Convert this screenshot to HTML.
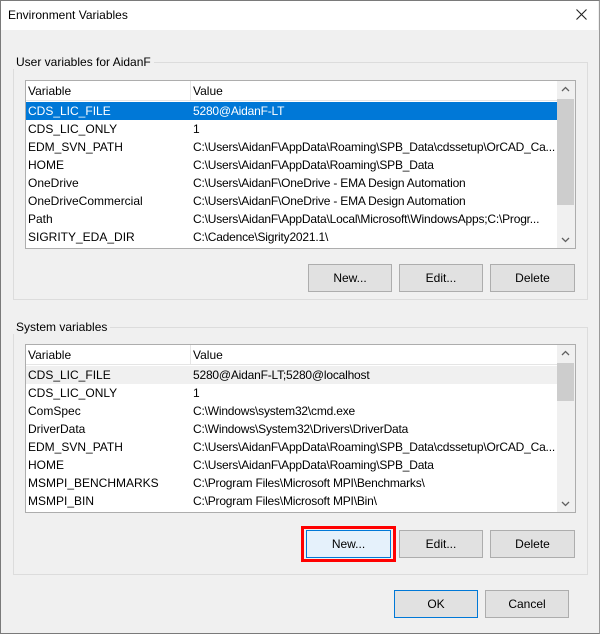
<!DOCTYPE html>
<html><head><style>
*{margin:0;padding:0;box-sizing:border-box}
body{width:600px;height:634px;background:#f0f0f0;font-family:"Liberation Sans",sans-serif;font-size:12px;color:#000;position:relative;overflow:hidden}
.a{position:absolute}
.win{left:0;top:0;width:600px;height:634px;border:1px solid #7a7a7a;border-right-color:#9a9a9a}
.title{left:1px;top:1px;width:597px;height:29px;background:#fff}
.grp{border:1px solid #dcdcdc}
.lbl{background:#f0f0f0;padding:0 3px}
.list{background:#fff;border:1px solid #adadad;overflow:hidden}
.row{position:absolute;left:0;height:18px;line-height:18px;width:531px;white-space:nowrap;overflow:hidden}
.row span{position:absolute}
.row .v{left:2px}.row .w{left:167px;letter-spacing:-0.2px}
.hdr{position:absolute;left:0;top:0;width:531px;height:20px;line-height:20px;border-bottom:1px solid #e5e5e5}
.hdr .d{position:absolute;left:164px;top:0;width:1px;height:20px;background:#e5e5e5}
.sb{position:absolute;right:0;top:0;width:18px;height:100%;background:#f0f0f0}
.th{position:absolute;left:0;width:17px;background:#cdcdcd}
.btn{position:absolute;background:#e1e1e1;border:1px solid #adadad;text-align:center;font-size:12px}
.arr{position:absolute;left:4px}
</style></head><body>
<div class="a win"></div>
<div class="a title"></div>
<div class="a" style="left:8px;top:8px;font-size:12px">Environment Variables</div>
<svg class="a" style="left:576px;top:9px" width="11" height="11"><path d="M0.5 0.5L10.5 10.5M10.5 0.5L0.5 10.5" stroke="#222" stroke-width="1.1"/></svg>

<div class="a grp" style="left:13px;top:62px;width:575px;height:238px"></div>
<div class="a lbl" style="left:13px;top:55px">User variables for AidanF</div>
<div class="a list" style="left:25px;top:80px;width:551px;height:169px">
 <div class="hdr"><span style="position:absolute;left:2px">Variable</span><div class="d"></div><span style="position:absolute;left:167px">Value</span></div>
 <div class="row" style="top:21px;background:#0078d7;color:#fff"><span class="v">CDS_LIC_FILE</span><span class="w">5280@AidanF-LT</span></div>
 <div class="row" style="top:39px"><span class="v">CDS_LIC_ONLY</span><span class="w">1</span></div>
 <div class="row" style="top:57px"><span class="v">EDM_SVN_PATH</span><span class="w">C:\Users\AidanF\AppData\Roaming\SPB_Data\cdssetup\OrCAD_Ca...</span></div>
 <div class="row" style="top:75px"><span class="v">HOME</span><span class="w">C:\Users\AidanF\AppData\Roaming\SPB_Data</span></div>
 <div class="row" style="top:93px"><span class="v">OneDrive</span><span class="w">C:\Users\AidanF\OneDrive - EMA Design Automation</span></div>
 <div class="row" style="top:111px"><span class="v">OneDriveCommercial</span><span class="w">C:\Users\AidanF\OneDrive - EMA Design Automation</span></div>
 <div class="row" style="top:129px"><span class="v">Path</span><span class="w">C:\Users\AidanF\AppData\Local\Microsoft\WindowsApps;C:\Progr...</span></div>
 <div class="row" style="top:147px"><span class="v">SIGRITY_EDA_DIR</span><span class="w">C:\Cadence\Sigrity2021.1\</span></div>
 <div class="sb"><svg class="arr" style="top:5px" width="9" height="6"><path d="M1 5L4.5 1.5L8 5" stroke="#606060" stroke-width="1.3" fill="none"/></svg><div class="th" style="top:18px;height:106px"></div><svg class="arr" style="bottom:5px" width="9" height="6"><path d="M1 1L4.5 4.5L8 1" stroke="#606060" stroke-width="1.3" fill="none"/></svg></div>
</div>
<div class="btn" style="left:308px;top:264px;width:84px;height:28px;line-height:26px">New...</div>
<div class="btn" style="left:399px;top:264px;width:84px;height:28px;line-height:26px">Edit...</div>
<div class="btn" style="left:490px;top:264px;width:85px;height:28px;line-height:26px">Delete</div>

<div class="a grp" style="left:13px;top:327px;width:575px;height:248px"></div>
<div class="a lbl" style="left:13px;top:320px">System variables</div>
<div class="a list" style="left:25px;top:344px;width:551px;height:169px">
 <div class="hdr"><span style="position:absolute;left:2px">Variable</span><div class="d"></div><span style="position:absolute;left:167px">Value</span></div>
 <div class="row" style="top:21px;background:#f0f0f0"><span class="v">CDS_LIC_FILE</span><span class="w">5280@AidanF-LT;5280@localhost</span></div>
 <div class="row" style="top:39px"><span class="v">CDS_LIC_ONLY</span><span class="w">1</span></div>
 <div class="row" style="top:57px"><span class="v">ComSpec</span><span class="w">C:\Windows\system32\cmd.exe</span></div>
 <div class="row" style="top:75px"><span class="v">DriverData</span><span class="w">C:\Windows\System32\Drivers\DriverData</span></div>
 <div class="row" style="top:93px"><span class="v">EDM_SVN_PATH</span><span class="w">C:\Users\AidanF\AppData\Roaming\SPB_Data\cdssetup\OrCAD_Ca...</span></div>
 <div class="row" style="top:111px"><span class="v">HOME</span><span class="w">C:\Users\AidanF\AppData\Roaming\SPB_Data</span></div>
 <div class="row" style="top:129px"><span class="v">MSMPI_BENCHMARKS</span><span class="w">C:\Program Files\Microsoft MPI\Benchmarks\</span></div>
 <div class="row" style="top:147px"><span class="v">MSMPI_BIN</span><span class="w">C:\Program Files\Microsoft MPI\Bin\</span></div>
 <div class="sb"><svg class="arr" style="top:5px" width="9" height="6"><path d="M1 5L4.5 1.5L8 5" stroke="#606060" stroke-width="1.3" fill="none"/></svg><div class="th" style="top:18px;height:38px"></div><svg class="arr" style="bottom:5px" width="9" height="6"><path d="M1 1L4.5 4.5L8 1" stroke="#606060" stroke-width="1.3" fill="none"/></svg></div>
</div>
<div class="a" style="left:301px;top:526px;width:95px;height:36px;border:3px solid #f00"></div>
<div class="btn" style="left:306px;top:530px;width:85px;height:28px;line-height:26px;background:#e5f1fb;border-color:#0078d7">New...</div>
<div class="btn" style="left:399px;top:530px;width:84px;height:28px;line-height:26px">Edit...</div>
<div class="btn" style="left:490px;top:530px;width:85px;height:28px;line-height:26px">Delete</div>

<div class="btn" style="left:394px;top:590px;width:84px;height:28px;line-height:26px;border-color:#0078d7">OK</div>
<div class="btn" style="left:485px;top:590px;width:84px;height:28px;line-height:26px">Cancel</div>
</body></html>
